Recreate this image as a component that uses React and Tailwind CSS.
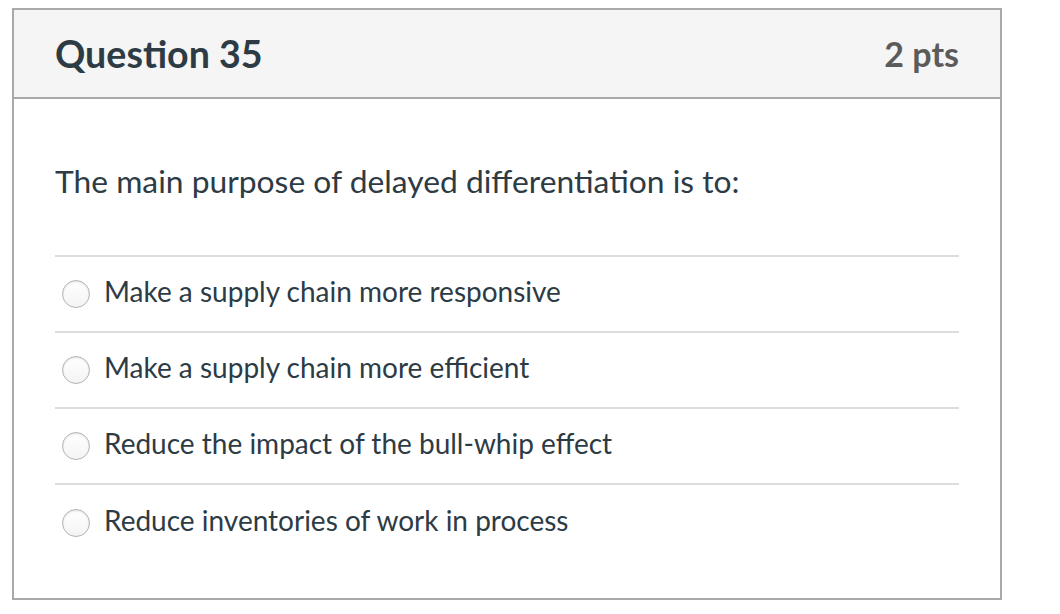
import React from "react";

const answers = [
  "Make a supply chain more responsive",
  "Make a supply chain more efficient",
  "Reduce the impact of the bull-whip effect",
  "Reduce inventories of work in process",
];

function Radio() {
  return (
    <span className="w-[28px] h-[28px] shrink-0 rounded-full border border-[#b4b4b4] bg-gradient-to-b from-white to-[#f4f4f4] shadow-[inset_0_1px_2px_rgba(0,0,0,0.12)]" />
  );
}

export default function App() {
  return (
    <div
      className="w-[1060px] h-[614px] bg-white pt-[8px] pl-[12px]"
      style={{ fontFamily: "Lato, 'Noto Sans', sans-serif" }}
    >
      <div className="w-[990px] h-[592px] border-2 border-[#a9a9a9] flex flex-col">
        <div className="h-[89px] bg-[#f5f5f5] border-b-2 border-[#a9a9a9] flex items-center justify-between px-[41px]">
          <h2 className="text-[37.6px] font-bold text-[#2d3b45] leading-none">
            Question 35
          </h2>
          <span className="text-[34px] font-bold text-[#5b5b5b] leading-none">
            2 pts
          </span>
        </div>
        <div className="px-[41px] pt-[64px]">
          <p className="text-[31.8px] text-[#2d3b45] leading-[36px]">
            The main purpose of delayed differentiation is to:
          </p>
          <div className="mt-[56px] border-t-2 border-[#dddddd]">
            {answers.map((a) => (
              <div
                key={a}
                className="h-[76px] border-b-2 border-[#dddddd] last:border-b-0 flex items-center gap-[14px] pl-[7px]"
              >
                <Radio />
                <span className="text-[28px] text-[#2d3b45] leading-none -mt-[7px]">
                  {a}
                </span>
              </div>
            ))}
          </div>
        </div>
      </div>
    </div>
  );
}
